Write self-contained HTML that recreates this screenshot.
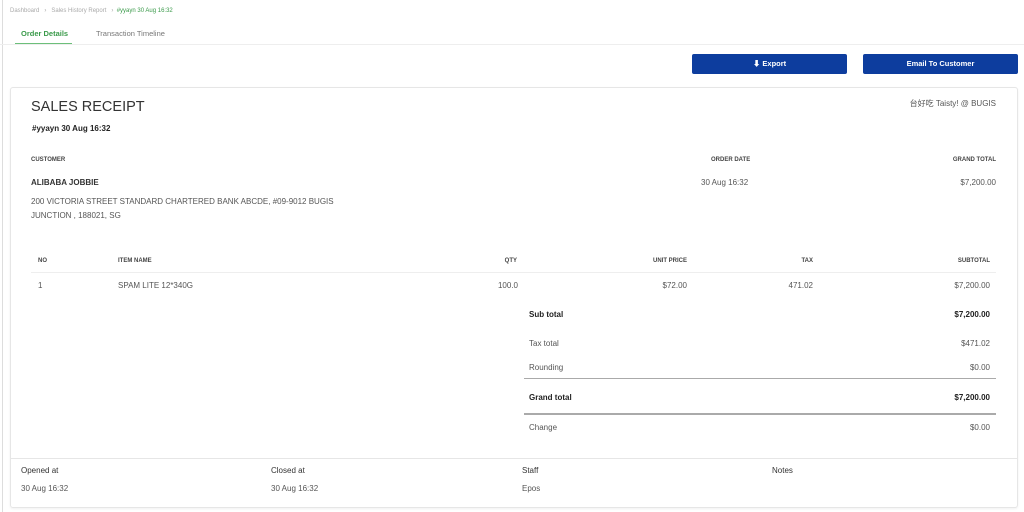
<!DOCTYPE html>
<html><head><meta charset="utf-8"><style>
*{margin:0;padding:0;box-sizing:border-box}
body{width:1024px;height:512px;background:#fff;font-family:"Liberation Sans","Noto Sans CJK SC",sans-serif;color:#555;position:relative;overflow:hidden;font-size:8px}
.a{position:absolute;white-space:nowrap}
.h{font-size:6px;font-weight:bold;color:#444}
.r{text-align:right}
.b{font-weight:bold;color:#222}
.btn{position:absolute;background:#0d3d9e;color:#fff;font-weight:bold;font-size:7.5px;text-align:center;border-radius:2px;line-height:20px;height:20px;top:54px}
</style></head><body>
<div class="a" style="left:2px;top:0;width:1px;height:512px;background:#ddd"></div>
<div class="a" style="left:10px;top:8px;font-size:6px;color:#aaa">Dashboard &nbsp; › &nbsp; Sales History Report &nbsp; › &nbsp;<span style="color:#3a9a4a">#yyayn 30 Aug 16:32</span></div>
<div class="a" style="left:21px;top:29px;font-size:7.5px;color:#3a9a4a;font-weight:bold">Order Details</div>
<div class="a" style="left:15px;top:43px;width:57px;height:1px;background:#6cbf7a"></div>
<div class="a" style="left:96px;top:29px;font-size:7.5px;color:#777">Transaction Timeline</div>
<div class="a" style="left:0;top:44px;width:1024px;height:1px;background:#eee"></div>
<div class="btn" style="left:692px;width:155px">⬇ Export</div>
<div class="btn" style="left:863px;width:155px">Email To Customer</div>
<div class="a" style="left:10px;top:87px;width:1008px;height:421px;border:1px solid #e6e6e6;border-radius:3px;box-shadow:0 1px 2px rgba(0,0,0,.06)"></div>
<div class="a" style="left:31px;top:99px;font-size:14.5px;color:#333">SALES RECEIPT</div>
<div class="a b" style="left:32px;top:124px;font-size:8px">#yyayn 30 Aug 16:32</div>
<div class="a" style="right:28px;top:98px;font-size:8px;color:#555">台好吃 Taisty! @ BUGIS</div>
<div class="a h" style="left:31px;top:157px">CUSTOMER</div>
<div class="a h" style="left:711px;top:157px">ORDER DATE</div>
<div class="a h" style="right:28px;top:157px">GRAND TOTAL</div>
<div class="a b" style="left:31px;top:178px;font-size:8px;color:#333">ALIBABA JOBBIE</div>
<div class="a" style="left:701px;top:178px">30 Aug 16:32</div>
<div class="a" style="right:28px;top:178px">$7,200.00</div>
<div class="a" style="left:31px;top:195px;line-height:14px">200 VICTORIA STREET STANDARD CHARTERED BANK ABCDE, #09-9012 BUGIS<br>JUNCTION , 188021, SG</div>
<div class="a h" style="left:38px;top:258px">NO</div>
<div class="a h" style="left:118px;top:258px">ITEM NAME</div>
<div class="a h" style="right:507px;top:258px">QTY</div>
<div class="a h" style="right:337px;top:258px">UNIT PRICE</div>
<div class="a h" style="right:211px;top:258px">TAX</div>
<div class="a h" style="right:34px;top:258px">SUBTOTAL</div>
<div class="a" style="left:31px;top:272px;width:965px;height:1px;background:#eee"></div>
<div class="a" style="left:38px;top:281px">1</div>
<div class="a" style="left:118px;top:281px">SPAM LITE 12*340G</div>
<div class="a" style="right:506px;top:281px">100.0</div>
<div class="a" style="right:337px;top:281px">$72.00</div>
<div class="a" style="right:211px;top:281px">471.02</div>
<div class="a" style="right:34px;top:281px">$7,200.00</div>
<div class="a b" style="left:529px;top:310px">Sub total</div>
<div class="a b r" style="right:34px;top:310px">$7,200.00</div>
<div class="a" style="left:529px;top:339px">Tax total</div>
<div class="a" style="right:34px;top:339px">$471.02</div>
<div class="a" style="left:529px;top:363px">Rounding</div>
<div class="a" style="right:34px;top:363px">$0.00</div>
<div class="a" style="left:524px;top:378px;width:472px;height:1px;background:#aaa"></div>
<div class="a b" style="left:529px;top:393px">Grand total</div>
<div class="a b" style="right:34px;top:393px">$7,200.00</div>
<div class="a" style="left:524px;top:413px;width:472px;height:2px;background:#aaa"></div>
<div class="a" style="left:529px;top:423px">Change</div>
<div class="a" style="right:34px;top:423px">$0.00</div>
<div class="a" style="left:11px;top:458px;width:1006px;height:1px;background:#e6e6e6"></div>
<div class="a" style="left:21px;top:466px;color:#333">Opened at</div>
<div class="a" style="left:271px;top:466px;color:#333">Closed at</div>
<div class="a" style="left:522px;top:466px;color:#333">Staff</div>
<div class="a" style="left:772px;top:466px;color:#333">Notes</div>
<div class="a" style="left:21px;top:484px">30 Aug 16:32</div>
<div class="a" style="left:271px;top:484px">30 Aug 16:32</div>
<div class="a" style="left:522px;top:484px">Epos</div>
</body></html>
